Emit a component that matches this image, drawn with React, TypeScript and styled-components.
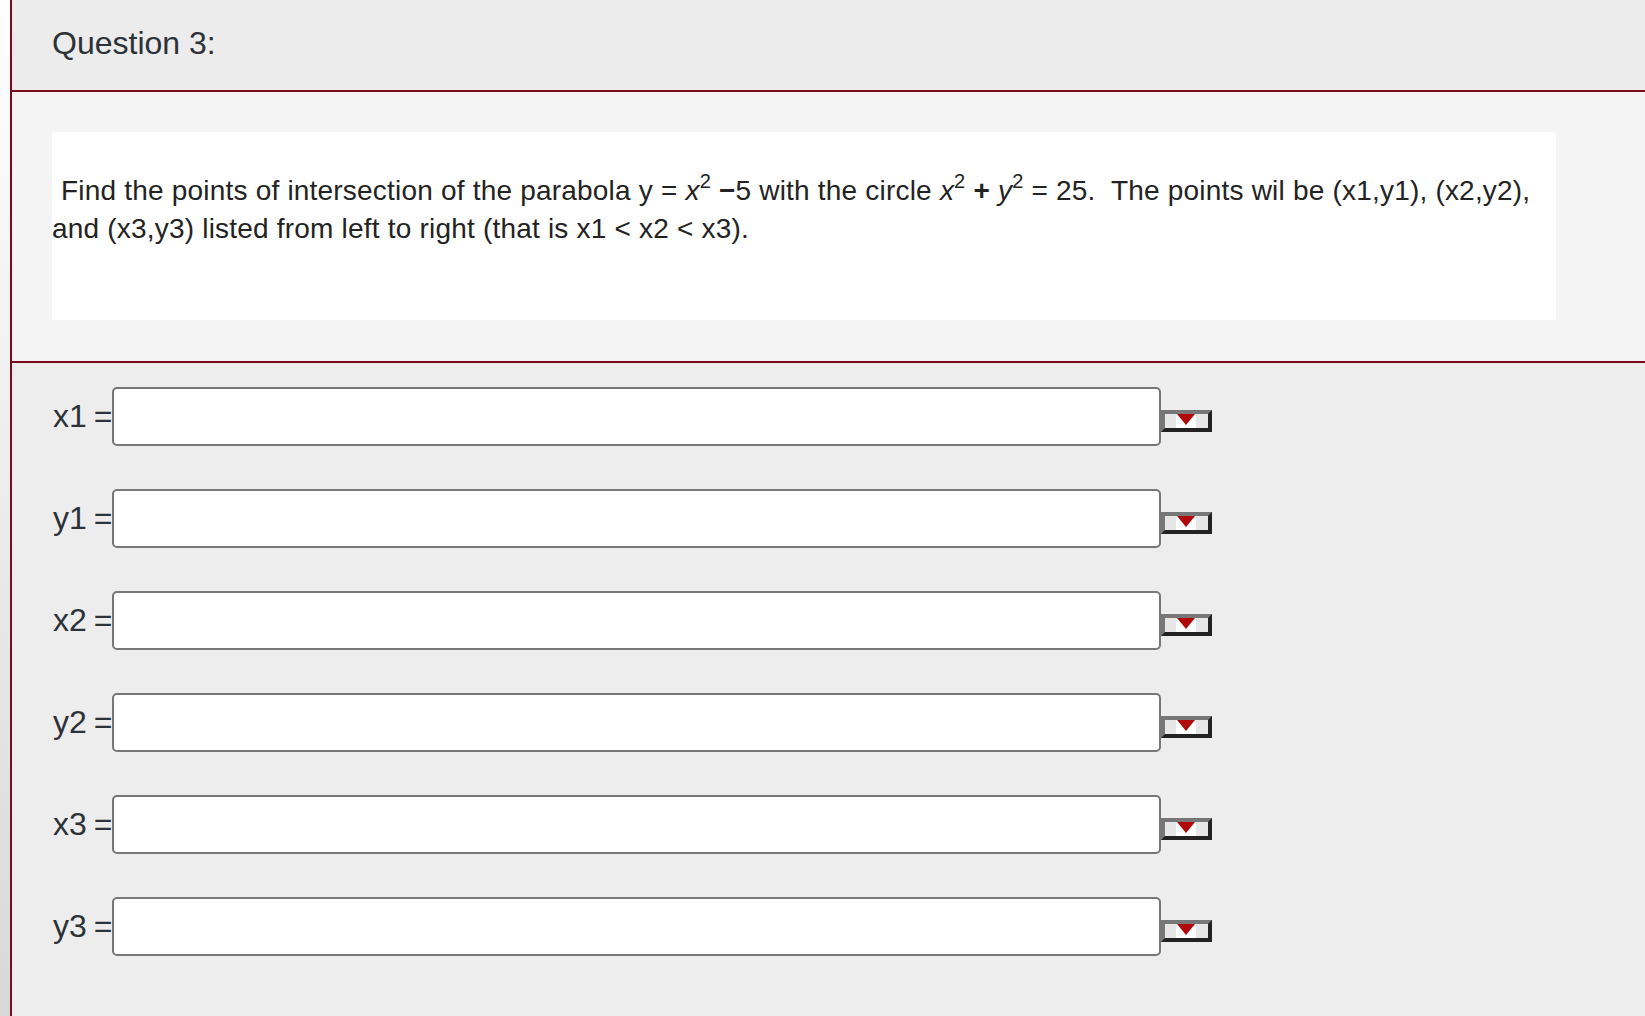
import styled, { createGlobalStyle } from 'styled-components';

const GlobalStyle = createGlobalStyle`
  html, body {
    margin: 0;
    padding: 0;
  }
  body {
    background: linear-gradient(to bottom, #ffffff, #d8d8d8);
    font-family: "Liberation Sans", Arial, sans-serif;
  }
`;

const answers = ['x1', 'y1', 'x2', 'y2', 'x3', 'y3'];

export default function App() {
  return (
    <>
      <GlobalStyle />
      <Page>
        <Header>Question 3:</Header>
        <QuestionBody>
          <QuestionText>
            <Line className="first">
              Find the points of intersection of the parabola y = <Var>x</Var>
              <Sup>2</Sup> <Op>−</Op>5 with the circle <Var>x</Var>
              <Sup>2</Sup> <Op>+</Op> <Var>y</Var>
              <Sup>2</Sup> = 25.&nbsp; The points wil be (x1,y1), (x2,y2),
            </Line>
            <Line>and (x3,y3) listed from left to right (that is x1 &lt; x2 &lt; x3).</Line>
          </QuestionText>
        </QuestionBody>
        <Answers>
          {answers.map((name) => (
            <Row key={name}>
              <Label>{name} =</Label>
              <Input type="text" />
              <DropIcon>
                <svg width="43" height="14" viewBox="0 0 43 14">
                  <rect x="0" y="0" width="43" height="14" fill="#e6e6e6" />
                  <rect x="11" y="0" width="20" height="14" fill="#ffffff" />
                  <polygon points="12,0 30,0 21,11" fill="#b00808" />
                </svg>
              </DropIcon>
            </Row>
          ))}
        </Answers>
      </Page>
    </>
  );
}

const Page = styled.div`
  margin-left: 10px;
  border-left: 2px solid #7d0a1f;
  min-height: 100vh;
  display: flex;
  flex-direction: column;
  box-sizing: border-box;
`;

const Header = styled.div`
  height: 92px;
  box-sizing: border-box;
  background: #ececec;
  border-bottom: 2px solid #7d0a1f;
  display: flex;
  align-items: center;
  padding-left: 40px;
  padding-bottom: 4px;
  font-size: 32px;
  color: #2d3238;
`;

const QuestionBody = styled.div`
  background: #f4f4f4;
  border-bottom: 2px solid #7d0a1f;
  padding: 40px 89px 41px 40px;
`;

const QuestionText = styled.div`
  background: #ffffff;
  height: 188px;
  box-sizing: border-box;
  padding-top: 40px;
  font-size: 28px;
  color: #232323;
  letter-spacing: 0.2px;
`;

const Line = styled.div`
  line-height: 38px;
  white-space: nowrap;

  &.first {
    padding-left: 9px;
  }
`;

const Var = styled.span`
  font-style: italic;
`;

const Sup = styled.sup`
  font-size: 20px;
  line-height: 0;
  vertical-align: 12px;
`;

const Op = styled.span`
  font-weight: bold;
`;

const Answers = styled.div`
  flex: 1;
  background: #ededed;
  padding: 24px 0 40px 41px;
  display: flex;
  flex-direction: column;
  gap: 43px;
`;

const Row = styled.div`
  display: flex;
  align-items: flex-start;
`;

const Label = styled.span`
  font-size: 32px;
  line-height: 59px;
  color: #2d3238;
  word-spacing: -2px;
`;

const Input = styled.input`
  width: 1049px;
  height: 59px;
  box-sizing: border-box;
  border: 2px solid #777777;
  border-radius: 5px;
  background: #ffffff;
  margin: 0;
  padding: 0 8px;
  font-size: 24px;
  outline: none;
`;

const DropIcon = styled.div`
  margin-top: 23px;
  display: flex;
  border-style: solid;
  border-width: 4px;
  border-color: #777777 #222222 #222222 #777777;

  svg {
    display: block;
  }
`;
